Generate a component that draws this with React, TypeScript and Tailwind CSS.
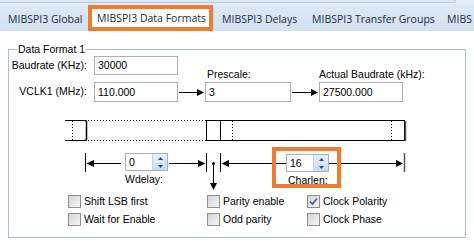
import React from "react"

// Small helpers for the WinForms-style dialog

function Spin({ value, width }: { value: string; width: string }) {
  return (
    <div className={`flex h-[18px] ${width} border border-[#abadb3] bg-white`}>
      <div className="flex-1 pl-[3px] leading-[16px]">{value}</div>
      <div className="flex w-[15px] flex-col border-l border-[#c5d6ea] bg-gradient-to-b from-[#e6f0fb] to-[#c6dcf3]">
        <div className="flex flex-1 items-center justify-center">
          <svg width="5" height="3" viewBox="0 0 5 3">
            <polygon points="0,3 2.5,0 5,3" fill="#1f4a85" />
          </svg>
        </div>
        <div className="flex flex-1 items-center justify-center">
          <svg width="5" height="3" viewBox="0 0 5 3">
            <polygon points="0,0 5,0 2.5,3" fill="#1f4a85" />
          </svg>
        </div>
      </div>
    </div>
  )
}

function Check({ label, checked }: { label: string; checked?: boolean }) {
  return (
    <div className="flex h-[13px] items-center gap-[3px]">
      <div className="flex h-[13px] w-[13px] items-center justify-center border border-[#8e8f8f] bg-gradient-to-br from-[#d4d4d4] to-[#f6f6f6]">
        {checked && (
          <svg width="9" height="9" viewBox="0 0 9 9">
            <path d="M1 4.5 L3.5 7 L8 1.5" stroke="#3b5a96" strokeWidth="1.6" fill="none" />
          </svg>
        )}
      </div>
      <span className="leading-[13px]">{label}</span>
    </div>
  )
}

function ArrowRight({ w }: { w: number }) {
  return (
    <svg width={w} height="20" viewBox={`0 0 ${w} 20`} className="shrink-0">
      <line x1="1" y1="10.5" x2={w - 5} y2="10.5" stroke="#000" strokeWidth="1" />
      <polygon points={`${w - 8},7 ${w - 1},10.5 ${w - 8},14`} fill="#000" />
    </svg>
  )
}

function Field({ value, width }: { value: string; width: string }) {
  return (
    <div className={`h-[20px] ${width} border border-[#abadb3] bg-white pl-[3px] leading-[18px]`}>
      {value}
    </div>
  )
}

export default function App() {
  return (
    <div className="h-[251px] w-[474px] overflow-hidden bg-white font-['Liberation_Sans',Arial,sans-serif] text-[10.5px] text-black">
      {/* strip of the panel above */}
      <div className="h-[5px] bg-[#e3edf8]">
        <div className="h-[3px] w-[456px] rounded-br-[3px] border-b border-r border-[#b5c8de] bg-[#dbe7f5]" />
      </div>

      {/* tabs */}
      <div className="flex h-[26px] whitespace-nowrap bg-gradient-to-b from-[#dce8f6] to-[#d1e1f3] font-['Open_Sans',sans-serif] text-[10.5px] text-[#1b2a3d]">
        <div className="flex w-[88px] items-center pl-[8px] pt-[3px]">MIBSPI3 Global</div>
        <div className="flex w-[125px] items-center border-[4px] border-[#ef7d31] bg-white pl-[5px] pt-[1px]">
          MIBSPI3 Data Formats
        </div>
        <div className="flex w-[98px] items-center pl-[9px] pt-[3px]">MIBSPI3 Delays</div>
        <div className="flex w-[136px] items-center pl-[1px] pt-[3px]">MIBSPI3 Transfer Groups</div>
        <div className="flex items-center pt-[3px]">MIBS</div>
      </div>

      {/* group */}
      <fieldset className="ml-[8px] mt-[12px] h-[195px] w-[458px] border border-[#a9bdd5]">
        <legend className="ml-[8px] px-[1px] leading-[12px]">Data Format 1</legend>

        <div className="flex items-end pt-[1px]">
          <div className="flex flex-col gap-[7px]">
            <div className="flex h-[19px] items-center">
              <div className="w-[81px] pr-[3px] text-right">Baudrate (KHz):</div>
              <div className="ml-[4px] h-[19px] w-[84px] border border-[#abadb3] pl-[3px] leading-[17px]">30000</div>
            </div>
            <div className="flex h-[20px] items-center">
              <div className="w-[81px] pr-[3px] text-right">VCLK1 (MHz):</div>
              <div className="ml-[4px]">
                <Field value="110.000" width="w-[84px]" />
              </div>
            </div>
          </div>
          <ArrowRight w={27} />
          <div className="flex flex-col">
            <div className="mb-[2px] pl-[2px] leading-[12px]">Prescale:</div>
            <Field value="3" width="w-[86px]" />
          </div>
          <ArrowRight w={28} />
          <div className="flex flex-col">
            <div className="mb-[2px] leading-[12px]">Actual Baudrate (kHz):</div>
            <Field value="27500.000" width="w-[84px]" />
          </div>
        </div>

        {/* frame diagram */}
        <div className="ml-[56px] mt-[18px]">
          <svg width="342" height="21" viewBox="0 0 342 21">
            <line x1="0" y1="0.5" x2="21" y2="0.5" stroke="#000" />
            <line x1="0" y1="20.5" x2="21" y2="20.5" stroke="#000" />
            <line x1="7.5" y1="1" x2="7.5" y2="20" stroke="#000" strokeDasharray="1 2" />
            <path d="M20 0.5 Q21.5 0.5 21.5 2 L21.5 19 Q21.5 20.5 20 20.5" stroke="#000" strokeWidth="1.5" fill="none" />
            <line x1="23" y1="0.5" x2="141" y2="0.5" stroke="#000" strokeDasharray="1 2" />
            <line x1="23" y1="20.5" x2="141" y2="20.5" stroke="#000" strokeDasharray="1 2" />
            <rect x="141.5" y="0.5" width="198" height="20" fill="#fff" stroke="#000" />
            <line x1="340.5" y1="1" x2="340.5" y2="21" stroke="#555" strokeWidth="1.5" />
            <line x1="155.5" y1="0.5" x2="155.5" y2="20.5" stroke="#000" />
            <line x1="167.5" y1="1" x2="167.5" y2="20" stroke="#000" strokeDasharray="1 2" />
            <line x1="326.5" y1="1" x2="326.5" y2="20" stroke="#000" strokeDasharray="1 2" />
          </svg>
        </div>

        <div className="ml-[75px] mt-[6px] flex h-[43px] items-start">
          <svg width="41" height="43" viewBox="0 0 41 43" className="shrink-0">
            <line x1="1.5" y1="6" x2="1.5" y2="25" stroke="#000" />
            <line x1="3" y1="16.5" x2="37" y2="16.5" stroke="#000" />
            <polygon points="2.5,16.5 10,13 10,20" fill="#000" />
          </svg>
          <div className="flex w-[43px] flex-col pt-[6px]">
            <Spin value="0" width="w-[43px]" />
            <div className="mt-[2px] leading-[12px]">Wdelay:</div>
          </div>
          <svg width="104" height="43" viewBox="0 0 104 43" className="shrink-0">
            <line x1="1" y1="16.5" x2="33" y2="16.5" stroke="#000" />
            <polygon points="30,13 37.5,16.5 30,20" fill="#000" />
            <line x1="38.5" y1="6" x2="38.5" y2="25" stroke="#000" />
            <line x1="52.5" y1="6" x2="52.5" y2="25" stroke="#000" />
            <circle cx="45.5" cy="16.5" r="1.5" fill="#000" />
            <line x1="45.5" y1="16.5" x2="45.5" y2="38" stroke="#000" />
            <polygon points="42,36 45.5,43 49,36" fill="#000" />
            <polygon points="53.5,16.5 61,13 61,20" fill="#000" />
            <line x1="58" y1="16.5" x2="104" y2="16.5" stroke="#000" />
          </svg>
          <div className="flex h-[41px] w-[69px] shrink-0 flex-col border-[4px] border-[#ef7d31] pt-[3px]">
            <div className="flex items-center">
              <div className="h-px w-[10px] bg-black" />
              <Spin value="16" width="w-[43px]" />
              <div className="h-px flex-1 bg-black" />
            </div>
            <div className="ml-[12px] mt-[2px] leading-[12px]">Charlen:</div>
          </div>
          <svg width="65" height="43" viewBox="0 0 65 43" className="shrink-0">
            <line x1="0" y1="16.5" x2="58" y2="16.5" stroke="#000" />
            <polygon points="55,13 62,16.5 55,20" fill="#000" />
            <line x1="63.5" y1="6" x2="63.5" y2="25" stroke="#555" strokeWidth="1.5" />
          </svg>
        </div>

        {/* options */}
        <div className="ml-[59px] mt-[5px] flex">
          <div className="flex w-[139px] flex-col gap-[5px]">
            <Check label="Shift LSB first" />
            <Check label="Wait for Enable" />
          </div>
          <div className="flex w-[100px] flex-col gap-[5px]">
            <Check label="Parity enable" />
            <Check label="Odd parity" />
          </div>
          <div className="flex flex-col gap-[5px]">
            <Check label="Clock Polarity" checked />
            <Check label="Clock Phase" />
          </div>
        </div>
      </fieldset>
    </div>
  )
}
